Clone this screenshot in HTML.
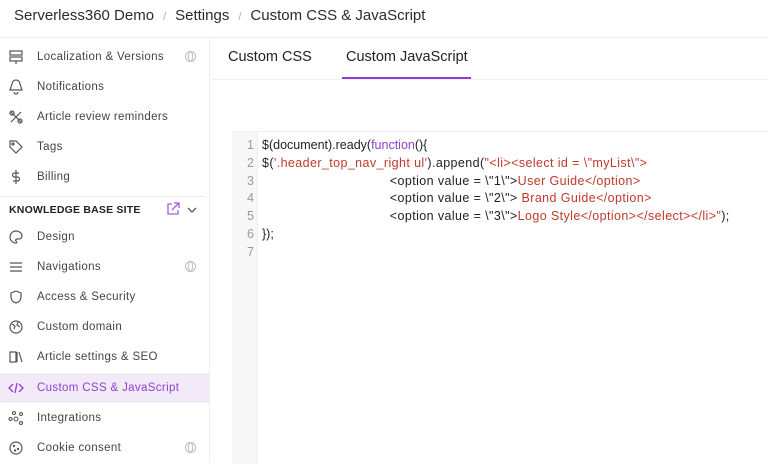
<!DOCTYPE html>
<html><head><meta charset="utf-8"><style>
*{margin:0;padding:0;box-sizing:border-box}
body{width:768px;height:463px;overflow:hidden;background:#fff;font-family:"Liberation Sans",sans-serif;color:#333;position:relative}
.hdr{position:absolute;left:0;top:0;width:768px;height:38px;border-bottom:1px solid #eee;font-size:15px;color:#2b2b2b;padding:7px 0 0 14px}
.hdr .sep{color:#aaa;margin:0 9px;font-size:11px}
.side{position:absolute;left:0;top:38px;width:210px;height:425px;border-right:1px solid #eee}
.it{position:absolute;left:0;width:210px;height:30px;font-size:11.5px;letter-spacing:.35px;color:#444;line-height:30px;padding-left:37px}
.it svg{position:absolute;left:8px;top:7px}
.glb{position:absolute;right:14px;top:9px;width:11px;height:11px;border:1px solid #bbb;border-radius:50%}
.glb:before{content:"";position:absolute;left:2px;top:-1px;width:5px;height:11px;border:1px solid #bbb;border-radius:50%;box-sizing:border-box}
.act{background:#f3eaf8;color:#8e3fd1}
.sec{position:absolute;left:9px;top:166px;font-size:10.5px;font-weight:bold;letter-spacing:.2px;color:#222}
.div{position:absolute;left:0;top:158px;width:205px;border-top:1px solid #eee}
.tabs{position:absolute;left:211px;top:38px;width:557px;height:42px;border-bottom:1px solid #f0f0f0;font-size:14.5px;color:#222}
.tabs span{position:absolute;top:11px}
.ul{position:absolute;left:131px;top:39px;width:129px;height:2px;background:#8e3fd1}
.code{position:absolute;left:232px;top:131px;width:536px;height:332px;border-top:1px solid #f0f0f0}
.gut{position:absolute;left:0;top:0;width:26px;height:332px;background:#f7f7f7;border-right:1px solid #eee}
.ln{position:absolute;font-size:12.5px;line-height:17.8px;top:5px}
.gut .ln{right:3px;text-align:right;color:#999}
.src{left:30px;color:#222;white-space:pre}
.ls{letter-spacing:.4px}
.r{color:#c0392b}.p{color:#8e3fd1}
</style></head><body>
<div class="hdr">Serverless360 Demo<span class="sep">/</span>Settings<span class="sep">/</span>Custom CSS &amp; JavaScript</div>
<div class="side">
<div class="it" style="top:4px"><svg width="16" height="16" fill="none" stroke="#555" stroke-width="1.2"><rect x="2" y="2" width="12" height="4"/><rect x="2" y="8" width="12" height="4"/><path d="M8 12v3"/></svg>Localization &amp; Versions<span class="glb"></span></div>
<div class="it" style="top:34px"><svg width="16" height="16" fill="none" stroke="#555" stroke-width="1.2"><path d="M2 11l2-6a4 4 0 018 0l2 6zM6 13a2 2 0 004 0"/></svg>Notifications</div>
<div class="it" style="top:64px"><svg width="16" height="16" fill="none" stroke="#555" stroke-width="1.2"><path d="M3 3l10 10M13 3L3 13"/><circle cx="4" cy="4" r="2"/><circle cx="12" cy="12" r="2"/></svg>Article review reminders</div>
<div class="it" style="top:94px"><svg width="16" height="16" fill="none" stroke="#555" stroke-width="1.2"><path d="M2 2h6l6 6-6 6-6-6z"/><circle cx="5" cy="5" r="1"/></svg>Tags</div>
<div class="it" style="top:124px"><svg width="16" height="16" fill="none" stroke="#555" stroke-width="1.2"><path d="M11 4H6.5a2 2 0 000 4h3a2 2 0 010 4H5M8 1v14"/></svg>Billing</div>
<div class="div"></div>
<div class="sec">KNOWLEDGE BASE SITE</div>
<svg style="position:absolute;left:166px;top:164px" width="14" height="14" fill="none" stroke="#a25ddc" stroke-width="1.3"><path d="M6 2H2v10h10V8M8 1h5v5M13 1L6 8"/></svg>
<svg style="position:absolute;left:187px;top:169px" width="10" height="6" fill="none" stroke="#555" stroke-width="1.3"><path d="M1 1l4 4 4-4"/></svg>
<div class="it" style="top:184px"><svg width="16" height="16" fill="none" stroke="#555" stroke-width="1.2"><path d="M8 2a6 6 0 100 12c1 0 1-1 0-2s0-2 1-2h2a3 3 0 003-3c0-3-3-5-6-5z"/></svg>Design</div>
<div class="it" style="top:214px"><svg width="16" height="16" fill="none" stroke="#555" stroke-width="1.2"><path d="M2 4h12M2 8h12M2 12h12"/></svg>Navigations<span class="glb"></span></div>
<div class="it" style="top:244px"><svg width="16" height="16" fill="none" stroke="#555" stroke-width="1.2"><path d="M8 2l5 2v4c0 3-2 5-5 6-3-1-5-3-5-6V4z"/></svg>Access &amp; Security</div>
<div class="it" style="top:274px"><svg width="16" height="16" fill="none" stroke="#555" stroke-width="1.2"><circle cx="8" cy="8" r="6"/><path d="M4 5l3 2-1 3M10 3l-1 3 3 2"/></svg>Custom domain</div>
<div class="it" style="top:304px"><svg width="16" height="16" fill="none" stroke="#555" stroke-width="1.2"><rect x="2" y="3" width="6" height="10"/><path d="M9 3v10M11 3l3 10"/></svg>Article settings &amp; SEO</div>
<div class="it act" style="top:335px"><svg width="16" height="16" fill="none" stroke="#8e3fd1" stroke-width="1.3"><path d="M5 4L1 8l4 4M11 4l4 4-4 4M9 3L7 13"/></svg>Custom CSS &amp; JavaScript</div>
<div class="it" style="top:365px"><svg width="16" height="16" fill="none" stroke="#555" stroke-width="1.1"><circle cx="2.5" cy="9" r="1.5"/><circle cx="8" cy="9" r="2"/><circle cx="13" cy="4" r="1.5"/><circle cx="13" cy="13" r="1.5"/><circle cx="6" cy="3" r="1.5"/></svg>Integrations</div>
<div class="it" style="top:395px"><svg width="16" height="16" fill="none" stroke="#555" stroke-width="1.2"><circle cx="8" cy="8" r="6"/><circle cx="6" cy="6" r=".6"/><circle cx="10" cy="9" r=".6"/><circle cx="7" cy="10.5" r=".6"/></svg>Cookie consent<span class="glb"></span></div>
</div>
<div class="tabs"><span style="left:17px">Custom CSS</span><span style="left:135px">Custom JavaScript</span><div class="ul"></div></div>
<div class="code">
<div class="gut"><div class="ln">1<br>2<br>3<br>4<br>5<br>6<br>7</div></div>
<div class="ln src">$(document).ready(<span class="p">function</span>(){
<span class="ls">$(<span class="r">'.header_top_nav_right ul'</span>).append(<span class="r">"&lt;li&gt;&lt;select id = \"myList\"&gt;</span></span>
<span class="ls">                                 &lt;option value = \"1\"&gt;<span class="r">User Guide&lt;/option&gt;</span></span>
<span class="ls">                                 &lt;option value = \"2\"&gt;<span class="r"> Brand Guide&lt;/option&gt;</span></span>
<span class="ls">                                 &lt;option value = \"3\"&gt;<span class="r">Logo Style&lt;/option&gt;&lt;/select&gt;&lt;/li&gt;"</span>);</span>
});
</div>
</div>
</body></html>
